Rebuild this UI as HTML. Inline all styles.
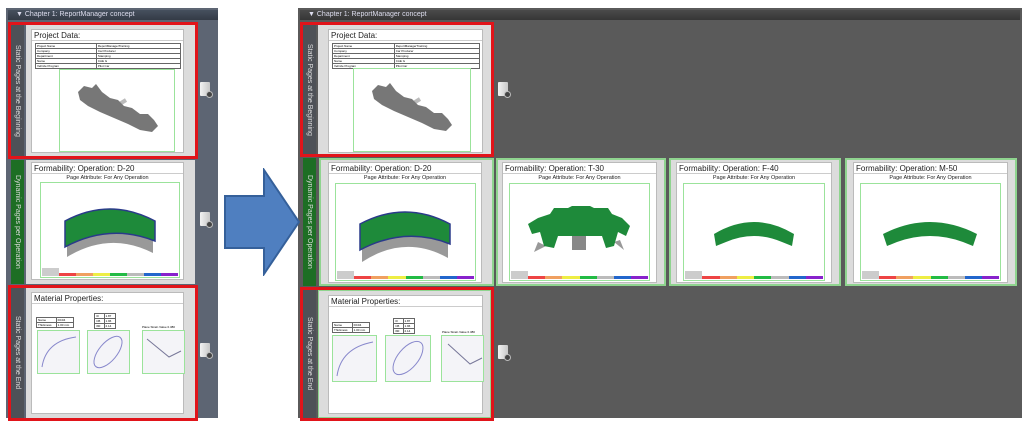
<!DOCTYPE html>
<html><head><meta charset="utf-8"><style>
*{margin:0;padding:0;box-sizing:border-box}
body{width:1024px;height:427px;background:#fff;position:relative;overflow:hidden;font-family:"Liberation Sans",sans-serif}
.a{position:absolute}
.hdr{height:10px;color:#dde;font-size:7px;line-height:10px;padding-left:8px;background:linear-gradient(#46505e,#343b46)}
.red{border:3px solid #e1141a}
.side{width:13px;background:#4e5157}
.side.g{background:#1d6e24}
.vt{position:absolute;left:0;top:0;width:13px;height:100%;writing-mode:vertical-rl;color:#ddd;font-size:7px;line-height:13px;text-align:center}
.frame{background:#dcdcdc}
.page{background:#fff;border:1px solid #bbb}
.ttl{font-size:8px;color:#222;border-bottom:1px solid #ccc;padding-left:2px;height:11px;line-height:11px;white-space:nowrap}
.sub{font-size:5.5px;text-align:center;color:#222;height:8px;line-height:8px}
.gb{border:1px solid #9be39b}
.tb{font-size:3px;border-collapse:collapse}
.tb td{border:1px solid #666;height:5px;padding:0 1px;line-height:4px}
.ico{width:10px;height:14px;background:linear-gradient(90deg,#f2f2f2,#c8c8c8);border-radius:1px}
.ico:after{content:"";position:absolute;right:-3px;bottom:-2px;width:5px;height:5px;border-radius:50%;background:#444;border:1px solid #bbb}
.leg{position:absolute;left:1px;right:1px;bottom:1px;height:8px;display:flex}
.leg i{flex:1;height:3px;margin-top:5px}
.leg i:first-child{height:8px;margin-top:0}
</style></head><body>

<div class="a" style="left:6px;top:8px;width:212px;height:410px;background:#5d6573"></div>
<div class="a hdr" style="left:8px;top:10px;width:210px">▼ Chapter 1: ReportManager concept</div>

<div class="a" style="left:298px;top:8px;width:724px;height:410px;background:#5a5a5a"></div>
<div class="a hdr" style="left:300px;top:10px;width:720px;background:linear-gradient(#4a4a4a,#363636)">▼ Chapter 1: ReportManager concept</div>

<svg class="a" style="left:222px;top:168px" width="80" height="108"><path d="M3 28 H42 V2 L77 54 L42 106 V80 H3 Z" fill="#4f7fc0" stroke="#35609a" stroke-width="2"/></svg>

<!-- left static top -->
<div class="a red" style="left:8px;top:22px;width:190px;height:137px"></div>
<div class="a side" style="left:11px;top:25px;height:131px"><div class="vt">Static Pages at the Beginning</div></div>
<div class="a frame" style="left:26px;top:25px;height:131px;width:169px"></div>
<div class="a page" style="left:31px;top:29px;width:153px;height:124px">
 <div class="ttl">Project Data:</div>
 <table class="tb a" style="left:3px;top:13px;width:146px"><tr><td>Project Name</td><td>ReportManagerTraining</td></tr><tr><td>Company</td><td>Car Producer</td></tr><tr><td>Department</td><td>Stamping</td></tr><tr><td>Name</td><td>CAE G</td></tr><tr><td>Vehicle Program</td><td>Pilot Car</td></tr></table>
 <div class="a gb" style="left:27px;top:39px;width:116px;height:83px">
  <svg width="114" height="81"><path d="M50 40 L66 30" stroke="#bbb" stroke-width="4"/><path d="M18 22 L24 16 L32 18 L36 14 L42 22 L50 28 L58 30 L64 36 L72 38 L80 44 L88 44 L94 50 L98 56 L92 62 L80 60 L68 54 L54 48 L40 42 L28 36 L20 30 Z" fill="#777"/></svg>
 </div>
</div>
<div class="a ico" style="left:200px;top:82px"></div>

<!-- left dynamic -->
<div class="a side g" style="left:11px;top:160px;height:124px"><div class="vt">Dynamic Pages per Operation</div></div>
<div class="a frame" style="left:26px;top:160px;height:124px;width:169px"></div>
<div class="a page" style="left:31px;top:162px;width:153px;height:118px">
 <div class="ttl">Formability: Operation: D-20</div>
 <div class="sub">Page Attribute: For Any Operation</div>
 <div class="a gb" style="left:8px;top:19px;width:140px;height:96px">
  <svg width="138" height="86"><path d="M26 42 Q69 20 112 42 L112 70 Q69 48 26 74 Z" fill="#999"/><path d="M24 38 Q69 14 114 38 L114 58 Q69 40 24 64 Z" fill="#1e8a3a" stroke="#2a3a8a" stroke-width="1.5"/></svg>
  <div class="leg"><i style="background:#ccc"></i><i style="background:#e44"></i><i style="background:#f0a060"></i><i style="background:#ee4"></i><i style="background:#2b4"></i><i style="background:#bbb"></i><i style="background:#26c"></i><i style="background:#82c"></i></div>
 </div>
</div>
<div class="a ico" style="left:200px;top:212px"></div>

<!-- left material -->
<div class="a red" style="left:8px;top:285px;width:190px;height:136px"></div>
<div class="a side" style="left:11px;top:288px;height:130px"><div class="vt">Static Pages at the End</div></div>
<div class="a frame" style="left:26px;top:288px;height:130px;width:169px"></div>
<div class="a page" style="left:31px;top:292px;width:153px;height:122px">
 <div class="ttl">Material Properties:</div>
 <table class="tb a" style="left:4px;top:24px;width:38px"><tr><td>Name</td><td>DC04</td></tr><tr><td>Thickness</td><td>1.00 mm</td></tr></table>
 <table class="tb a" style="left:62px;top:20px;width:22px"><tr><td>r0</td><td>1.87</td></tr><tr><td>r45</td><td>1.96</td></tr><tr><td>r90</td><td>2.14</td></tr></table>
 <div class="a" style="left:110px;top:32px;font-size:3px">Plane Strain Value 0.380</div>
 <div class="a gb" style="left:5px;top:37px;width:43px;height:44px;background:#f4f4f8"><svg width="41" height="42"><path d="M4 36 Q8 10 38 6" stroke="#88c" fill="none"/></svg></div>
 <div class="a gb" style="left:55px;top:37px;width:43px;height:44px;background:#f4f4f8"><svg width="41" height="42"><ellipse cx="20" cy="21" rx="9" ry="19" transform="rotate(40 20 21)" stroke="#88c" fill="none"/></svg></div>
 <div class="a gb" style="left:110px;top:37px;width:43px;height:44px;background:#f4f4f8"><svg width="41" height="42"><path d="M4 8 L26 26 L38 20" stroke="#779" fill="none"/></svg></div>
</div>
<div class="a ico" style="left:200px;top:343px"></div>

<!-- RIGHT static top -->
<div class="a red" style="left:300px;top:22px;width:194px;height:135px"></div>
<div class="a side" style="left:303px;top:25px;height:129px"><div class="vt">Static Pages at the Beginning</div></div>
<div class="a frame" style="left:318px;top:25px;height:129px;width:173px"></div>
<div class="a page" style="left:328px;top:29px;width:155px;height:124px">
 <div class="ttl">Project Data:</div>
 <table class="tb a" style="left:3px;top:13px;width:148px"><tr><td>Project Name</td><td>ReportManagerTraining</td></tr><tr><td>Company</td><td>Car Producer</td></tr><tr><td>Department</td><td>Stamping</td></tr><tr><td>Name</td><td>CAE G</td></tr><tr><td>Vehicle Program</td><td>Pilot Car</td></tr></table>
 <div class="a gb" style="left:24px;top:38px;width:118px;height:84px">
  <svg width="116" height="82"><path d="M50 40 L66 30" stroke="#bbb" stroke-width="4"/><path d="M18 22 L24 16 L32 18 L36 14 L42 22 L50 28 L58 30 L64 36 L72 38 L80 44 L88 44 L94 50 L98 56 L92 62 L80 60 L68 54 L54 48 L40 42 L28 36 L20 30 Z" fill="#777"/></svg>
 </div>
</div>
<div class="a ico" style="left:498px;top:82px"></div>

<!-- RIGHT dynamic row -->
<div class="a side g" style="left:303px;top:158px;height:128px"><div class="vt">Dynamic Pages per Operation</div></div>

<div class="a frame" style="left:319px;top:158px;width:175px;height:128px;border:2px solid #8fd48f"></div>
<div class="a page" style="left:328px;top:162px;width:154px;height:121px">
 <div class="ttl">Formability: Operation: D-20</div>
 <div class="sub">Page Attribute: For Any Operation</div>
 <div class="a gb" style="left:6px;top:20px;width:141px;height:98px">
  <svg width="139" height="88"><path d="M26 44 Q69 22 112 44 L112 74 Q69 50 26 78 Z" fill="#999"/><path d="M24 40 Q69 16 114 40 L114 60 Q69 42 24 66 Z" fill="#1e8a3a" stroke="#2a3a8a" stroke-width="1.5"/></svg>
  <div class="leg"><i style="background:#ccc"></i><i style="background:#e44"></i><i style="background:#f0a060"></i><i style="background:#ee4"></i><i style="background:#2b4"></i><i style="background:#bbb"></i><i style="background:#26c"></i><i style="background:#82c"></i></div>
 </div>
</div>

<div class="a frame" style="left:496px;top:158px;width:170px;height:128px;border:2px solid #8fd48f"></div>
<div class="a page" style="left:502px;top:162px;width:155px;height:121px">
 <div class="ttl">Formability: Operation: T-30</div>
 <div class="sub">Page Attribute: For Any Operation</div>
 <div class="a gb" style="left:6px;top:20px;width:141px;height:98px">
  <svg width="139" height="88"><path d="M62 52 H76 V66 H62 Z" fill="#888"/><path d="M24 68 L28 58 L36 62 Z M104 58 L114 66 L110 56 Z" fill="#999"/><path d="M18 40 L28 34 L40 30 L44 24 L58 24 L62 22 L80 22 L84 24 L98 24 L102 30 L112 34 L120 42 L116 52 L108 48 L104 62 L96 64 L92 52 L48 52 L44 64 L34 62 L30 48 L22 50 Z" fill="#1e8a3a"/></svg>
  <div class="leg"><i style="background:#ccc"></i><i style="background:#e44"></i><i style="background:#f0a060"></i><i style="background:#ee4"></i><i style="background:#2b4"></i><i style="background:#bbb"></i><i style="background:#26c"></i><i style="background:#82c"></i></div>
 </div>
</div>

<div class="a frame" style="left:669px;top:158px;width:172px;height:128px;border:2px solid #8fd48f"></div>
<div class="a page" style="left:676px;top:162px;width:156px;height:121px">
 <div class="ttl">Formability: Operation: F-40</div>
 <div class="sub">Page Attribute: For Any Operation</div>
 <div class="a gb" style="left:6px;top:20px;width:142px;height:98px">
  <svg width="140" height="88"><path d="M30 50 Q70 26 110 50 L108 62 L98 58 Q70 46 42 58 L32 62 Z" fill="#1e8a3a"/></svg>
  <div class="leg"><i style="background:#ccc"></i><i style="background:#e44"></i><i style="background:#f0a060"></i><i style="background:#ee4"></i><i style="background:#2b4"></i><i style="background:#bbb"></i><i style="background:#26c"></i><i style="background:#82c"></i></div>
 </div>
</div>

<div class="a frame" style="left:845px;top:158px;width:172px;height:128px;border:2px solid #8fd48f"></div>
<div class="a page" style="left:853px;top:162px;width:155px;height:121px">
 <div class="ttl">Formability: Operation: M-50</div>
 <div class="sub">Page Attribute: For Any Operation</div>
 <div class="a gb" style="left:6px;top:20px;width:141px;height:98px">
  <svg width="139" height="88"><path d="M22 50 Q69 26 116 50 L112 62 L102 58 Q69 46 36 58 L26 62 Z" fill="#1e8a3a"/></svg>
  <div class="leg"><i style="background:#ccc"></i><i style="background:#e44"></i><i style="background:#f0a060"></i><i style="background:#ee4"></i><i style="background:#2b4"></i><i style="background:#bbb"></i><i style="background:#26c"></i><i style="background:#82c"></i></div>
 </div>
</div>

<!-- RIGHT material -->
<div class="a red" style="left:300px;top:287px;width:194px;height:134px"></div>
<div class="a side" style="left:303px;top:290px;height:128px"><div class="vt">Static Pages at the End</div></div>
<div class="a frame" style="left:318px;top:290px;height:128px;width:173px;border:1px solid #8fd48f"></div>
<div class="a page" style="left:328px;top:295px;width:155px;height:119px">
 <div class="ttl">Material Properties:</div>
 <table class="tb a" style="left:3px;top:26px;width:38px"><tr><td>Name</td><td>DC04</td></tr><tr><td>Thickness</td><td>1.00 mm</td></tr></table>
 <table class="tb a" style="left:64px;top:22px;width:22px"><tr><td>r0</td><td>1.87</td></tr><tr><td>r45</td><td>1.96</td></tr><tr><td>r90</td><td>2.14</td></tr></table>
 <div class="a" style="left:113px;top:34px;font-size:3px">Plane Strain Value 0.380</div>
 <div class="a gb" style="left:3px;top:39px;width:45px;height:47px;background:#f4f4f8"><svg width="43" height="45"><path d="M4 40 Q8 12 40 6" stroke="#88c" fill="none"/></svg></div>
 <div class="a gb" style="left:56px;top:39px;width:46px;height:47px;background:#f4f4f8"><svg width="44" height="45"><ellipse cx="22" cy="22" rx="10" ry="20" transform="rotate(40 22 22)" stroke="#88c" fill="none"/></svg></div>
 <div class="a gb" style="left:112px;top:39px;width:43px;height:47px;background:#f4f4f8"><svg width="41" height="45"><path d="M6 8 L28 28 L40 22" stroke="#779" fill="none"/></svg></div>
</div>
<div class="a ico" style="left:498px;top:345px"></div>

</body></html>
